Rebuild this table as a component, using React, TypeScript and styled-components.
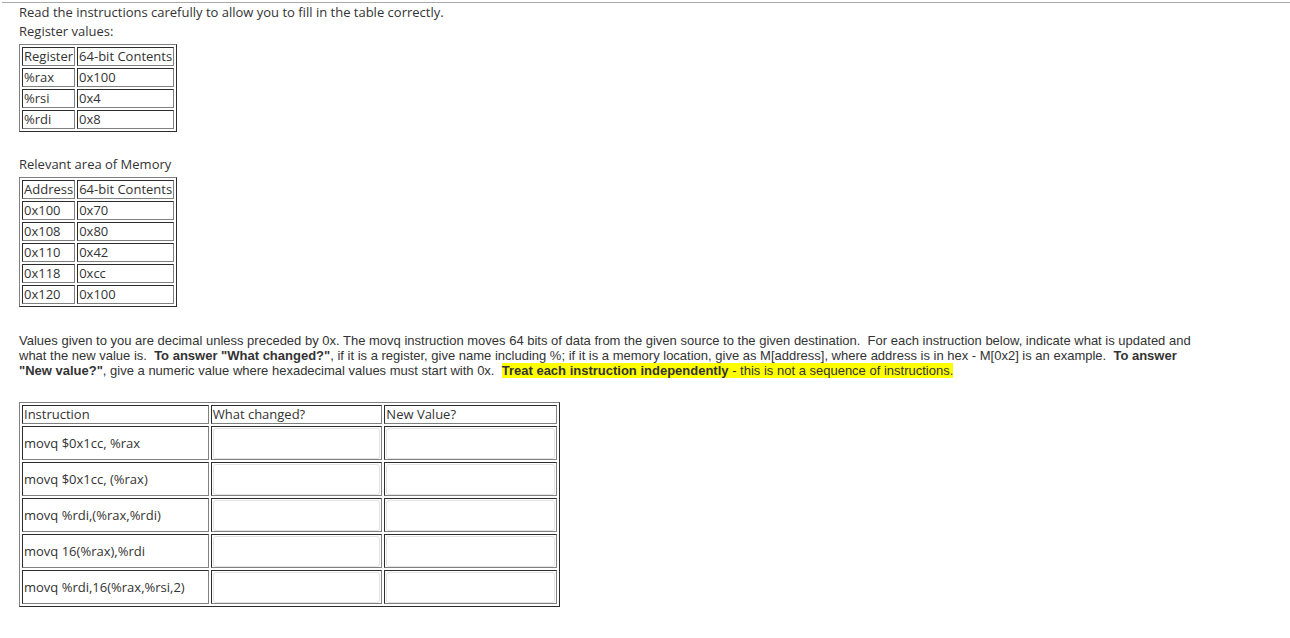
import React from 'react'
import styled, { createGlobalStyle } from 'styled-components'

const GlobalStyle = createGlobalStyle`
  body {
    margin: 0;
    background: #fff;
    color: #333;
    font-family: 'Open Sans', 'Liberation Sans', sans-serif;
    font-size: 13px;
  }
`

const TopRule = styled.div`
  height: 1px;
  margin: 2px 0 0 2px;
  background: #a9a9a9;
`

const Page = styled.div`
  padding-left: 19px;
`

const Line = styled.div<{ gap?: number }>`
  line-height: 19px;
  margin-top: ${(p) => p.gap || 0}px;
  white-space: nowrap;
`

const DataTable = styled.table<{ gap?: number }>`
  margin-top: ${(p) => p.gap || 0}px;
  border: 1px outset #808080;
  border-collapse: separate;
  border-spacing: 2px;
  font-family: 'Open Sans', sans-serif;
  font-size: 13px;
  color: #333;

  td {
    border: 1px inset #808080;
    padding: 0 1px;
    line-height: 17px;
    white-space: nowrap;
  }
`

const Instructions = styled.p`
  margin: 26px 0 0;
  font-family: 'Liberation Sans', Arial, sans-serif;
  font-size: 13px;
  line-height: 15px;
  color: #333;
  white-space: nowrap;
`

const Highlight = styled.span`
  background: #ffff00;
`

const AnswerTable = styled(DataTable)`
  margin-top: 24px;
  width: 541px;

  td {
    vertical-align: middle;
    height: 32px;
  }

  tr:first-child td {
    height: 17px;
  }
`

const AnswerBox = styled.div`
  box-sizing: border-box;
  height: 31px;
  border: 1px solid #e3e3e3;
  border-radius: 3px;
  background: #fff;
`

const registers = [
  ['%rax', '0x100'],
  ['%rsi', '0x4'],
  ['%rdi', '0x8'],
]

const memory = [
  ['0x100', '0x70'],
  ['0x108', '0x80'],
  ['0x110', '0x42'],
  ['0x118', '0xcc'],
  ['0x120', '0x100'],
]

const instructions = [
  'movq $0x1cc, %rax',
  'movq $0x1cc, (%rax)',
  'movq %rdi,(%rax,%rdi)',
  'movq 16(%rax),%rdi',
  'movq %rdi,16(%rax,%rsi,2)',
]

const App: React.FC = () => {
  return (
    <>
      <GlobalStyle />
      <TopRule />
      <Page>
        <Line>Read the instructions carefully to allow you to fill in the table correctly.</Line>
        <Line>Register values:</Line>
        <DataTable gap={3}>
          <tbody>
            <tr>
              <td>Register</td>
              <td>64-bit Contents</td>
            </tr>
            {registers.map(([reg, val]) => (
              <tr key={reg}>
                <td>{reg}</td>
                <td>{val}</td>
              </tr>
            ))}
          </tbody>
        </DataTable>

        <Line gap={23}>Relevant area of Memory</Line>
        <DataTable gap={3}>
          <tbody>
            <tr>
              <td>Address</td>
              <td>64-bit Contents</td>
            </tr>
            {memory.map(([addr, val]) => (
              <tr key={addr}>
                <td>{addr}</td>
                <td>{val}</td>
              </tr>
            ))}
          </tbody>
        </DataTable>

        <Instructions>
          Values given to you are decimal unless preceded by 0x. The movq instruction moves 64 bits of data from
          the given source to the given destination.&nbsp; For each instruction below, indicate what is updated and
          <br />
          what the new value is.&nbsp; <b>To answer "What changed?"</b>, if it is a register, give name including %;
          if it is a memory location, give as M[address], where address is in hex - M[0x2] is an example.&nbsp;{' '}
          <b>To answer</b>
          <br />
          <b>"New value?"</b>, give a numeric value where hexadecimal values must start with 0x.&nbsp;{' '}
          <Highlight>
            <b>Treat each instruction independently</b> - this is not a sequence of instructions.
          </Highlight>
        </Instructions>

        <AnswerTable>
          <colgroup>
            <col style={{ width: 186 }} />
            <col style={{ width: 171 }} />
            <col style={{ width: 172 }} />
          </colgroup>
          <tbody>
            <tr>
              <td>Instruction</td>
              <td>What changed?</td>
              <td>New Value?</td>
            </tr>
            {instructions.map((ins) => (
              <tr key={ins}>
                <td>{ins}</td>
                <td>
                  <AnswerBox />
                </td>
                <td>
                  <AnswerBox />
                </td>
              </tr>
            ))}
          </tbody>
        </AnswerTable>
      </Page>
    </>
  )
}

export default App
